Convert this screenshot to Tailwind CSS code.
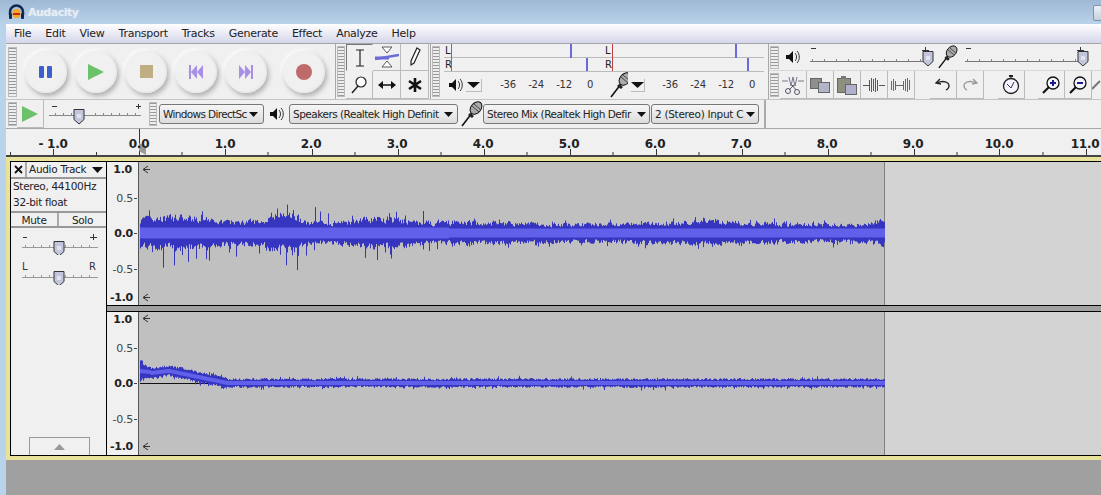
<!doctype html>
<html>
<head>
<meta charset="utf-8">
<script src="https://cdn.jsdelivr.net/npm/@tailwindcss/browser@4"></script>
</head>
<body class="m-0 w-[1101px] h-[495px] overflow-hidden bg-[#b9d3ea] font-['DejaVu_Sans',sans-serif] text-[11px] text-[#222] tracking-[-0.25px] leading-none">
<svg width="0" height="0" class="absolute">
  <defs>
    <g id="spk"><path d="M0 4h3l4-4v12l-4-4H0z" fill="#111"/><path d="M9 2c2 2 2 6 0 8M11 0c3 3 3 9 0 12" stroke="#333" fill="none"/></g>
    <g id="mic"><path d="M1 25 L11 12" stroke="#111" stroke-width="1.6"/><path d="M7 14l4 3 2-2-4-3z" fill="#222"/><ellipse cx="15" cy="7" rx="5" ry="7" transform="rotate(40 15 7)" fill="#aaa" stroke="#111"/><path d="M11 5l7 6M13 3l7 6" stroke="#444"/></g>
    <g id="thumb"><path d="M1 1.5h10v10l-5 4.5-5-4.5z" fill="#c3c5dc" stroke="#333"/><path d="M4 7h4M4 9h4" stroke="#fff"/></g>
    <g id="drop"><path d="M0 0h13l-6.500 6z" fill="#111"/></g>
  </defs>
</svg>

<!-- title bar -->
<div class="h-[24px] flex items-center bg-gradient-to-b from-[#9fb8d4] to-[#b9d3ea] pl-[8px] relative">
  <svg width="17" height="16" viewBox="0 0 17 16"><path d="M2 11V8a6.500 6.500 0 0 1 13 0v3" fill="none" stroke="#14264f" stroke-width="2.500"/><rect x="4.500" y="5" width="8" height="9" rx="3.500" fill="#f5a623"/><rect x="5" y="9" width="7" height="2" fill="#c8281e"/><rect x="1" y="9" width="3" height="6" rx="1" fill="#14264f"/><rect x="13" y="9" width="3" height="6" rx="1" fill="#14264f"/></svg>
  <span class="ml-[3px] font-bold text-[11px] tracking-[-0.5px] text-[#e6eef7] [text-shadow:0_0_3px_#c6d6e6]">Audacity</span>
  <div class="absolute left-[1093px] top-[5px] w-[12px] h-[16px] rounded-[2px] border border-[#7f93aa] bg-gradient-to-b from-[#eef2f7] to-[#c4d0dc]"></div>
</div>

<div class="ml-[6px]">
  <!-- menu -->
  <div class="h-[20px] flex items-center pl-[8px] gap-[14px] bg-gradient-to-b from-[#ffffff] to-[#d5d6ea] border-b border-[#a5a5a5] tracking-[-0.27px]">
    <span>File</span><span>Edit</span><span>View</span><span>Transport</span><span>Tracks</span><span>Generate</span><span>Effect</span><span>Analyze</span><span>Help</span>
  </div>

  <!-- toolbars -->
  <div class="bg-[#f0f0f0]">
    <div class="flex h-[56px] border-b border-[#c4c4c4]">
      <!-- transport -->
      <div class="w-[330px] flex items-center shrink-0 border-r border-[#a8a8a8]">
        <div class="ml-[2px] w-[9px] h-[50px] border border-[#bbb] bg-[repeating-linear-gradient(#999_0_1px,#eee_1px_3px)]"></div>
        <div class="ml-[8px] flex gap-[8px] items-center">
          <div class="w-[42px] h-[42px] rounded-full bg-[#f0f0f0] shadow-[2px_3px_5px_#b0b0b0,-2px_-2px_3px_#fafafa,inset_-1px_-1px_2px_#e4e4e4] flex items-center justify-center"><svg width="14" height="12"><rect x="0" width="5" height="12" rx="1" fill="#3f5fd0"/><rect x="8" width="5" height="12" rx="1" fill="#3f5fd0"/></svg></div>
          <div class="w-[42px] h-[42px] rounded-full bg-[#f0f0f0] shadow-[2px_3px_5px_#b0b0b0,-2px_-2px_3px_#fafafa,inset_-1px_-1px_2px_#e4e4e4] flex items-center justify-center"><svg width="16" height="16"><path d="M0 0l16 8-16 8z" fill="#6cc26a"/></svg></div>
          <div class="w-[42px] h-[42px] rounded-full bg-[#f0f0f0] shadow-[2px_3px_5px_#b0b0b0,-2px_-2px_3px_#fafafa,inset_-1px_-1px_2px_#e4e4e4] flex items-center justify-center"><div class="w-[13px] h-[13px] bg-[#bfae84]"></div></div>
          <div class="w-[42px] h-[42px] rounded-full bg-[#f0f0f0] shadow-[2px_3px_5px_#b0b0b0,-2px_-2px_3px_#fafafa,inset_-1px_-1px_2px_#e4e4e4] flex items-center justify-center"><svg width="14" height="14"><path d="M1 0v14" stroke="#8c6fd8" stroke-width="1.500"/><path d="M8 0v14L2 7zM14 0v14L8 7z" fill="#a78fe6"/></svg></div>
          <div class="w-[42px] h-[42px] rounded-full bg-[#f0f0f0] shadow-[2px_3px_5px_#b0b0b0,-2px_-2px_3px_#fafafa,inset_-1px_-1px_2px_#e4e4e4] flex items-center justify-center"><svg width="14" height="14"><path d="M13 0v14" stroke="#8c6fd8" stroke-width="1.500"/><path d="M6 0v14l6-7zM0 0v14l6-7z" fill="#a78fe6"/></svg></div>
          <div class="ml-[8px] w-[42px] h-[42px] rounded-full bg-[#f0f0f0] shadow-[2px_3px_5px_#b0b0b0,-2px_-2px_3px_#fafafa,inset_-1px_-1px_2px_#e4e4e4] flex items-center justify-center"><div class="w-[16px] h-[16px] rounded-full bg-[#bf6b6b]"></div></div>
        </div>
      </div>
      <!-- tools -->
      <div class="w-[95px] shrink-0 flex border-r border-[#a8a8a8]">
        <div class="ml-[1px] my-[2px] w-[8px] border border-[#bbb] bg-[repeating-linear-gradient(#999_0_1px,#eee_1px_3px)]"></div>
        <div class="grid grid-cols-[27px_28px_28px] grid-rows-[27px_28px] ml-[1px]">
          <div class="border border-[#777] border-b-[#eee] border-r-[#eee] flex items-center justify-center text-[#222]"><svg width="12" height="18"><path d="M2 1h8M6 1v16M2 17h8" stroke="#222" stroke-width="1.200" fill="none"/></svg></div>
          <div class="border-r border-b border-[#bbb] flex items-center justify-center"><svg width="24" height="22"><path d="M7 1h10l-5 6zM7 21h10l-5-6z" fill="#fff" stroke="#333" stroke-width=".8"/><path d="M0 13l24-4" stroke="#6c6cd8" stroke-width="2.500"/><path d="M0 12h14" stroke="#6c6cd8" stroke-width="3"/></svg></div>
          <div class="border-r border-b border-[#bbb] flex items-center justify-center"><svg width="12" height="20"><path d="M8 1l3 2-6 13-3 2 0-4z" fill="#fff" stroke="#222" stroke-width="1.200"/></svg></div>
          <div class="border-r border-b border-[#bbb] flex items-center justify-center"><svg width="16" height="18"><circle cx="10" cy="6" r="5" fill="#fff" stroke="#222" stroke-width="1.200"/><path d="M7 10l-6 7" stroke="#222" stroke-width="1.500"/></svg></div>
          <div class="border-r border-b border-[#bbb] flex items-center justify-center"><svg width="18" height="10"><path d="M3 5h12" stroke="#111" stroke-width="1.500"/><path d="M5 1L0 5l5 4zM13 1l5 4-5 4z" fill="#111"/></svg></div>
          <div class="border-r border-b border-[#bbb] flex items-center justify-center"><svg width="14" height="14"><path d="M7 0v14M1 3l12 8M13 3L1 11" stroke="#111" stroke-width="2.600"/></svg></div>
        </div>
      </div>
      <!-- meters -->
      <div class="flex w-[338px] shrink-0 border-r border-[#a8a8a8]">
        <div class="ml-[1px] my-[2px] w-[8px] border border-[#bbb] bg-[repeating-linear-gradient(#999_0_1px,#eee_1px_3px)]"></div>
        <div class="w-[160px] ml-[4px]">
          <div class="h-[14px] relative pl-[1px] pt-[2px] text-[10px] border-b border-[#bbb]">L<div class="absolute left-[7px] top-0 w-[1px] h-[14px] bg-[#3b9a3b]"></div><div class="absolute left-[126px] top-0 w-[2px] h-[14px] bg-[#6a6ad8]"></div></div>
          <div class="h-[14px] relative pl-[1px] text-[10px] pt-[2px] border-b border-[#bbb]">R<div class="absolute left-[7px] top-0 w-[1px] h-[13px] bg-[#3b9a3b]"></div><div class="absolute left-[142px] top-0 w-[2px] h-[13px] bg-[#6a6ad8]"></div></div>
          <div class="flex items-center h-[26px]">
            <svg class="ml-[5px]" width="14" height="12"><use href="#spk"/></svg>
            <div class="ml-[3px] w-[16px] h-[13px] border-b border-r border-[#bbb] flex items-center justify-center"><svg width="13" height="6"><use href="#drop"/></svg></div>
            <div class="ml-[12px] flex text-[10px] text-[#333] text-center"><span class="w-[28px]">-36</span><span class="w-[28px]">-24</span><span class="w-[28px]">-12</span><span class="w-[24px]">0</span></div>
          </div>
        </div>
        <div class="w-[160px] ml-[0px]">
          <div class="h-[14px] relative pl-[1px] pt-[2px] text-[10px] border-b border-[#bbb]">L<div class="absolute left-[8px] top-0 w-[1px] h-[14px] bg-[#c23d3d]"></div><div class="absolute left-[131px] top-0 w-[2px] h-[14px] bg-[#6a6ad8]"></div></div>
          <div class="h-[14px] relative pl-[1px] text-[10px] pt-[2px] border-b border-[#bbb]">R<div class="absolute left-[8px] top-0 w-[1px] h-[13px] bg-[#c23d3d]"></div><div class="absolute left-[143px] top-0 w-[2px] h-[13px] bg-[#6a6ad8]"></div></div>
          <div class="flex items-center h-[26px]">
            <svg class="ml-[6px]" width="22" height="26"><use href="#mic"/></svg>
            <div class="ml-[3px] w-[16px] h-[13px] border-b border-r border-[#bbb] flex items-center justify-center"><svg width="13" height="6"><use href="#drop"/></svg></div>
            <div class="ml-[11px] flex text-[10px] text-[#333] text-center"><span class="w-[28px]">-36</span><span class="w-[28px]">-24</span><span class="w-[28px]">-12</span><span class="w-[24px]">0</span></div>
          </div>
        </div>
      </div>
      <!-- mixer + edit -->
      <div class="flex-1 flex flex-col">
        <div class="h-[27px] flex items-center border-b border-[#d8d8d8]">
          <div class="ml-[1px] h-[23px] w-[9px] border border-[#bbb] bg-[repeating-linear-gradient(#999_0_1px,#eee_1px_3px)]"></div>
          <svg class="ml-[7px]" width="14" height="12"><use href="#spk"/></svg>
          <svg class="ml-[10px]" width="126" height="20"><path d="M0 14.500h118" stroke="#777"/><path d="M2.500 12v2M14.500 12v2M26.500 12v2M38.500 12v2M50.500 12v2M62.500 12v2M74.500 12v2M86.500 12v2M98.500 12v2M110.500 12v2" stroke="#888"/><path d="M1 1.500h5" stroke="#333"/><path d="M115.500 0v6M112 3.500h7" stroke="#333"/><use href="#thumb" x="112" y="3"/></svg>
          <svg class="ml-[2px]" width="20" height="26" viewBox="0 0 22 26"><use href="#mic"/></svg>
          <svg class="ml-[7px]" width="126" height="20"><path d="M0 14.500h118" stroke="#777"/><path d="M2.500 12v2M14.500 12v2M26.500 12v2M38.500 12v2M50.500 12v2M62.500 12v2M74.500 12v2M86.500 12v2M98.500 12v2M110.500 12v2" stroke="#888"/><path d="M1 1.500h5" stroke="#333"/><path d="M115.500 0v6M112 3.500h7" stroke="#333"/><use href="#thumb" x="112" y="3"/></svg>
        </div>
        <div class="h-[28px] flex items-center">
          <div class="ml-[1px] h-[24px] w-[9px] border border-[#bbb] bg-[repeating-linear-gradient(#999_0_1px,#eee_1px_3px)]"></div>
          <div class="ml-[1px] flex h-[28px]">
            <div class="w-[27px] border-r border-b border-[#bbb] flex items-center justify-center"><svg width="22" height="20"><path d="M0 6h6M16 6h6M7 2l2 9 2-9 2 9 2-9" stroke="#778" fill="none"/><path d="M12 10l-5 5M10 10l4 5" stroke="#556"/><circle cx="6" cy="16" r="2.500" fill="none" stroke="#556"/><circle cx="15" cy="17" r="2.500" fill="none" stroke="#556"/></svg></div>
            <div class="w-[27px] border-r border-b border-[#bbb] flex items-center justify-center"><svg width="20" height="16"><rect x="0.500" y="1.500" width="11" height="10" fill="#8f8f8f" stroke="#666"/><rect x="8.500" y="5.500" width="11" height="10" fill="#b2b4c8" stroke="#666"/></svg></div>
            <div class="w-[27px] border-r border-b border-[#bbb] flex items-center justify-center"><svg width="20" height="20"><rect x="0.500" y="3.500" width="13" height="14" fill="#8f8f80" stroke="#666"/><rect x="4" y="1" width="5" height="3" fill="#777"/><rect x="8.500" y="9.500" width="11" height="10" fill="#b0b0cc" stroke="#666"/></svg></div>
            <div class="w-[27px] border-r border-b border-[#bbb] flex items-center justify-center"><svg width="22" height="18"><path d="M0 9.500h6M16 9.500h6M6.500 4v11M8.500 2v14M10.500 3v12M12.500 2v14M14.500 4v11" stroke="#556" fill="none"/></svg></div>
            <div class="w-[27px] border-r border-b border-[#bbb] flex items-center justify-center"><svg width="22" height="18"><path d="M1.500 5v9M3.500 3v12M5.500 5v9M5 9.500h8M13.500 5v9M15.500 3v12M17.500 2v14M19.500 4v10" stroke="#667" fill="none"/></svg></div>
            <div class="ml-[15px] w-[27px] border-r border-b border-[#bbb] flex items-center justify-center"><svg width="16" height="13"><path d="M5 1L1 5l5 1M2 5c6-3 12-1 12 3 0 2-1 3-3 4" stroke="#222" stroke-width="1.300" fill="none"/></svg></div>
            <div class="w-[27px] border-r border-b border-[#bbb] flex items-center justify-center"><svg width="16" height="13"><path d="M11 1l4 4-5 1M14 5C8 2 2 4 2 8c0 2 1 3 3 4" stroke="#999" stroke-width="1.300" fill="none"/></svg></div>
            <div class="ml-[14px] w-[27px] border-r border-b border-[#bbb] flex items-center justify-center"><svg width="18" height="20"><rect x="7" y="0" width="4" height="2" fill="#222"/><path d="M9 2v2" stroke="#222"/><circle cx="9" cy="11" r="7.500" fill="#f4f4ff" stroke="#222" stroke-width="1.300"/><path d="M5 9l4 4 3-6" stroke="#334" fill="none"/></svg></div>
            <div class="ml-[13px] w-[27px] border-r border-b border-[#bbb] flex items-center justify-center"><svg width="18" height="18"><circle cx="11" cy="7" r="6" fill="#f4f4ff" stroke="#111" stroke-width="1.300"/><path d="M11 4v6M8 7h6" stroke="#1a1a8c" stroke-width="2"/><path d="M7 11l-6 6" stroke="#111" stroke-width="2.200"/></svg></div>
            <div class="w-[27px] border-r border-b border-[#bbb] flex items-center justify-center"><svg width="18" height="18"><circle cx="11" cy="7" r="6" fill="#f4f4ff" stroke="#111" stroke-width="1.300"/><path d="M8 7h6" stroke="#1a1a8c" stroke-width="2"/><path d="M7 11l-6 6" stroke="#111" stroke-width="2.200"/></svg></div>
            <div class="w-[27px] flex items-center"><svg width="10" height="12"><path d="M0 10l8-8" stroke="#777" stroke-width="2"/></svg></div>
          </div>
        </div>
      </div>
    </div>

    <!-- device row -->
    <div class="flex h-[29px] items-center border-b border-[#a8a8a8] text-[10.5px] tracking-[-0.5px]">
      <div class="ml-[2px] w-[9px] h-[24px] border border-[#bbb] bg-[repeating-linear-gradient(#999_0_1px,#eee_1px_3px)]"></div>
      <div class="w-[27px] h-[28px] border-r border-b border-[#bbb] flex items-center justify-center"><svg width="16" height="16"><path d="M0 0l16 8-16 8z" fill="#6cc26a"/></svg></div>
      <svg class="ml-[5px]" width="94" height="22"><path d="M0 12.500h92" stroke="#888"/><path d="M6.500 10v2M14.500 10v2M22.500 10v2M30.500 10v2M46.500 10v2M54.500 10v2M62.500 10v2M70.500 10v2M78.500 10v2M86.500 10v2" stroke="#888"/><path d="M3 3.500h5M87 3.500h5M89.500 1v5" stroke="#333"/><use href="#thumb" x="24" y="5"/></svg>
      <div class="ml-[6px] w-[8px] h-[24px] border border-[#bbb] bg-[repeating-linear-gradient(#999_0_1px,#eee_1px_3px)]"></div>
      <div class="ml-[2px] w-[105px] h-[20px] rounded-[3px] border border-[#777] bg-gradient-to-b from-[#f6f6f6] to-[#dcdcdc] flex items-center justify-between pl-[3px] pr-[5px]"><span class="whitespace-nowrap tracking-[-0.65px]">Windows DirectSc</span><svg width="9" height="5"><path d="M0 0h9L4.500 5z" fill="#111"/></svg></div>
      <svg class="ml-[6px]" width="14" height="12"><use href="#spk"/></svg>
      <div class="ml-[5px] w-[169px] h-[20px] rounded-[3px] border border-[#777] bg-gradient-to-b from-[#f6f6f6] to-[#dcdcdc] flex items-center justify-between pl-[3px] pr-[4px]"><span class="whitespace-nowrap">Speakers (Realtek High Definit</span><svg width="9" height="5"><path d="M0 0h9L4.500 5z" fill="#111"/></svg></div>
      <svg class="ml-[3px]" width="22" height="26"><use href="#mic"/></svg>
      <div class="w-[167px] h-[20px] rounded-[3px] border border-[#777] bg-gradient-to-b from-[#f6f6f6] to-[#dcdcdc] flex items-center justify-between pl-[3px] pr-[3px]"><span class="whitespace-nowrap">Stereo Mix (Realtek High Defir</span><svg width="9" height="5"><path d="M0 0h9L4.500 5z" fill="#111"/></svg></div>
      <div class="ml-[1px] w-[108px] h-[20px] rounded-[3px] border border-[#777] bg-gradient-to-b from-[#f6f6f6] to-[#dcdcdc] flex items-center justify-between pl-[3px] pr-[3px] tracking-[-0.3px]"><span class="whitespace-nowrap">2 (Stereo) Input C</span><svg width="9" height="5"><path d="M0 0h9L4.500 5z" fill="#111"/></svg></div>
      <div class="ml-[5px] w-[2px] h-[28px] bg-[#aaa]"></div>
    </div>
  </div>

  <!-- ruler -->
  <div class="h-[28px] bg-[#f0f0f0] border-b-2 border-[#444] relative">
    <svg class="absolute left-0 top-0" width="1095" height="26"><path d="M4.500 23v3M47.500 20v6M90.500 23v3M133.500 0v26M176 23v3M219.500 20v6M262 23v3M306.500 20v6M349 23v3M392.500 20v6M435 23v3M478.500 20v6M521 23v3M564.500 20v6M607 23v3M650.500 20v6M693 23v3M736.500 20v6M779 23v3M822.500 20v6M865 23v3M908.500 20v6M951 23v3M993.500 20v6M1037 23v3M1080.500 20v6" stroke="#333"/><path d="M133 14l7 3v9l-7-4z" fill="#999"/></svg>
    <div class="relative flex pl-[4px] pt-[9px] font-bold text-[12px] text-[#222] text-center">
      <span class="w-[86px] shrink-0">- 1.0</span><span class="w-[86px] shrink-0">0.0</span><span class="w-[86px] shrink-0">1.0</span><span class="w-[86px] shrink-0">2.0</span><span class="w-[86px] shrink-0">3.0</span><span class="w-[86px] shrink-0">4.0</span><span class="w-[86px] shrink-0">5.0</span><span class="w-[86px] shrink-0">6.0</span><span class="w-[86px] shrink-0">7.0</span><span class="w-[86px] shrink-0">8.0</span><span class="w-[86px] shrink-0">9.0</span><span class="w-[86px] shrink-0">10.0</span><span class="w-[86px] shrink-0">11.0</span>
    </div>
  </div>

  <!-- tracks -->
  <div class="bg-[#e9e29a] pt-[4px] pl-[4px] pb-[4px]">
    <div class="flex h-[295px] border-t border-l border-b border-black bg-[#f0f0f0] relative">
      <!-- panel -->
      <div class="w-[96px] shrink-0 border-r border-black flex flex-col text-[10.5px] tracking-[-0.3px]">
        <div class="flex h-[17px] border-b-2 border-[#999]">
          <div class="w-[16px] border-r-2 border-[#aaa] flex items-center justify-center"><svg width="9" height="9"><path d="M1 1l7 7M8 1L1 8" stroke="#111" stroke-width="1.800"/></svg></div>
          <div class="flex-1 flex items-center justify-between pl-[2px] pr-[3px]"><span>Audio Track</span><svg width="11" height="6"><path d="M0 0h11L5.500 6z" fill="#111"/></svg></div>
        </div>
        <div class="h-[16px] flex items-center pl-[2px] pb-[1px]">Stereo, 44100Hz</div>
        <div class="h-[16px] flex items-center pl-[2px] pb-[2px]">32-bit float</div>
        <div class="flex h-[17px] border-y-2 border-[#999] text-center">
          <div class="w-[48px] border-r-2 border-[#aaa] leading-[14px]">Mute</div>
          <div class="flex-1 leading-[14px]">Solo</div>
        </div>
        <svg class="ml-[10px] mt-[5px] shrink-0" width="80" height="22"><path d="M2 4.500h4" stroke="#333"/><path d="M72.500 1v6M69 4.500h7" stroke="#333"/><path d="M1 14.500h76" stroke="#999"/><path d="M4.500 12v2M12.500 12v2M20.500 12v2M28.500 12v2M44.500 12v2M52.500 12v2M60.500 12v2M68.500 12v2" stroke="#999"/><use href="#thumb" x="32" y="7"/></svg>
        <svg class="ml-[10px] mt-[4px] shrink-0" width="80" height="26"><text x="1" y="11" font-size="10" font-family="DejaVu Sans" fill="#333">L</text><text x="68" y="11" font-size="10" font-family="DejaVu Sans" fill="#333">R</text><path d="M1 18.500h76" stroke="#999"/><path d="M4.500 16v2M12.500 16v2M20.500 16v2M28.500 16v2M44.500 16v2M52.500 16v2M60.500 16v2M68.500 16v2" stroke="#999"/><use href="#thumb" x="32" y="11"/></svg>
        <div class="mt-auto ml-[18px] w-[61px] h-[18px] border border-b-0 border-[#999] flex items-center justify-center"><svg width="11" height="6"><path d="M5.500 0L11 6H0z" fill="#999"/></svg></div>
      </div>
      <!-- vertical rulers + waves -->
      <div class="flex-1 flex flex-col min-w-0">
        <div class="h-[143px] flex">
          <div class="w-[31px] shrink-0 relative flex flex-col items-end pr-[5px] pt-[2px] text-[11px]">
            <b class="h-[11px] mr-[1px]">1.0</b><span class="h-[11px] mt-[18px] text-[#444]">0.5</span><b class="h-[11px] mt-[24px]">0.0</b><span class="h-[11px] mt-[25px] text-[#444]">-0.5</span><b class="h-[11px] mt-[17px]">-1.0</b>
            <svg class="absolute left-[27px] top-0" width="4" height="143"><path d="M0 36.500h3M0 71.500h3M0 107.500h3" stroke="#444"/></svg>
          </div>
          <div class="flex-1 relative bg-[#d3d3d3] border-l border-[#555]">
            <div class="absolute left-0 top-0 bottom-0 w-[746px] bg-[#c0c0c0] border-r border-[#808080]"></div>
            <svg id="w1" class="absolute left-0 top-0" width="746" height="143"></svg>
            <svg class="absolute left-[1px] top-0" width="12" height="143"><path d="M8 4L3 7.500l5 3.500M3 7.500h7M8 132l-5 3.500 5 3.500M3 135.500h7" stroke="#333" fill="none"/></svg>
          </div>
        </div>
        <div class="h-[7px] bg-[#a0a0a0] border-y border-black relative"></div>
        <div class="h-[143px] flex">
          <div class="w-[31px] shrink-0 relative flex flex-col items-end pr-[5px] pt-[2px] text-[11px]">
            <b class="h-[11px] mr-[1px]">1.0</b><span class="h-[11px] mt-[18px] text-[#444]">0.5</span><b class="h-[11px] mt-[24px]">0.0</b><span class="h-[11px] mt-[25px] text-[#444]">-0.5</span><b class="h-[11px] mt-[16px]">-1.0</b>
            <svg class="absolute left-[27px] top-0" width="4" height="143"><path d="M0 36.500h3M0 71.500h3M0 107.500h3" stroke="#444"/></svg>
          </div>
          <div class="flex-1 relative bg-[#d3d3d3] border-l border-[#555]">
            <div class="absolute left-0 top-0 bottom-0 w-[746px] bg-[#c0c0c0] border-r border-[#808080]"></div>
            <svg id="w2" class="absolute left-0 top-0" width="746" height="143"></svg>
            <svg class="absolute left-[1px] top-0" width="12" height="143"><path d="M8 3L3 6.500l5 3.500M3 6.500h7M8 131l-5 3.500 5 3.500M3 134.500h7" stroke="#333" fill="none"/></svg>
          </div>
        </div>
      </div>
    </div>
  </div>
  <div class="h-[41px] bg-[#a0a0a0]"></div>
</div>

<script>
  // Deterministic waveform data for the two audio channels
  var seed = 7;
  function r() { seed = (seed * 16807) % 2147483647; return seed / 2147483647; }
  function draw(id, centre, envelope) {
    var outer = '', inner = '';
    var u = 1, d = 1;
    for (var x = 1; x < 746; x++) {
      var e = envelope(x), c = centre + e.offset;
      // loosely smoothed jitter plus occasional spikes: a noisy envelope
      u = 0.3 * u + 0.7 * (0.62 + 0.7 * r());
      d = 0.3 * d + 0.7 * (0.62 + 0.7 * r());
      var up = e.amp * u * (r() > 0.92 ? 1 + e.spike * r() : 1);
      var dn = e.amp * d * (r() > 0.88 ? 1 + e.spike * r() : 1);
      outer += 'M' + (x + 0.5) + ' ' + (c - up).toFixed(1) + 'V' + (c + dn).toFixed(1);
      inner += 'M' + (x + 0.5) + ' ' + (c - e.rms).toFixed(1) + 'V' + (c + e.rms).toFixed(1);
    }
    document.getElementById(id).innerHTML =
      '<path d="' + outer + '" stroke="#3535c0" fill="none"/>' +
      '<path d="' + inner + '" stroke="#6060ea" fill="none"/>';
  }
  draw('w1', 71, function (x) {
    var a = x < 160 ? 13 + 2 * Math.sin(x / 21) + (x > 125 ? 3 : 0)
          : x < 310 ? 12 + 2 * Math.sin(x / 17)
          : 9.500 + Math.sin(x / 40);
    if (x > 730) a += 2;
    return { amp: a, rms: x < 310 ? 5.500 : 4.500, spike: x < 310 ? 1.100 : 0.400, offset: 0 };
  });
  draw('w2', 71, function (x) {
    var off = 0, a = 4;
    if (x < 12) { off = -12 + x * 0.1; a = 10 - x * 0.45; }
    else if (x < 30) { off = -10 - (x - 12) * 0.12; a = 5; }
    else if (x < 88) { off = -12 + (x - 30) * 0.207; a = 5; }
    return { amp: a, rms: 2, spike: 0.6, offset: off };
  });
  // baseline in the second channel where the wave has risen above it
  document.getElementById('w2').insertAdjacentHTML('afterbegin', '<path d="M1 71.500H70" stroke="#111"/>');
</script>
</body>
</html>
